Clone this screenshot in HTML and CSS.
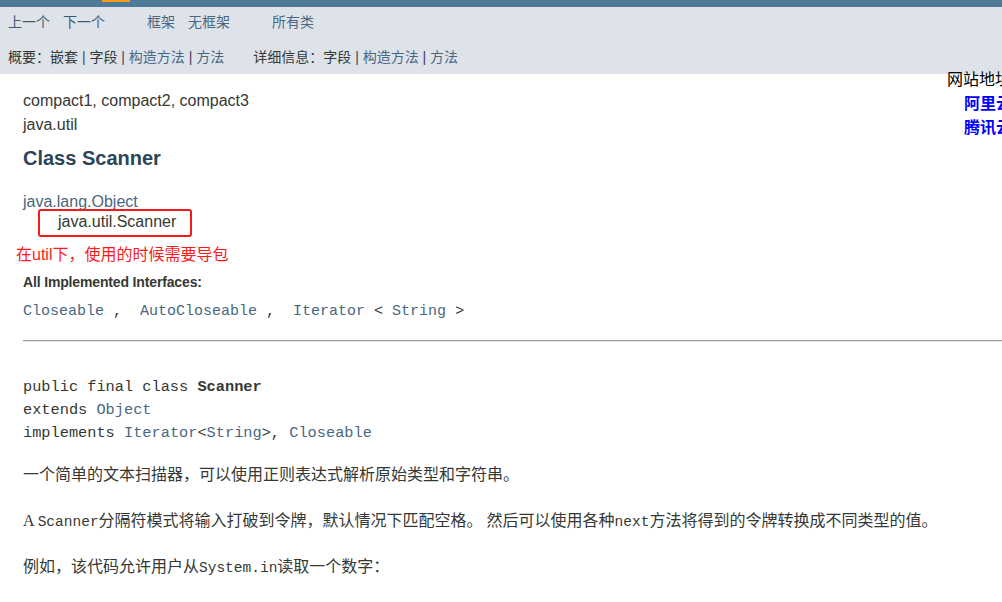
FILE: index.html
```html
<!DOCTYPE html>
<html lang="zh">

<head>
    <meta charset="utf-8">
    <meta name="viewport" content="width=device-width, initial-scale=1.0">

    <title>Scanner</title>

    <link rel="stylesheet" href="styles.css">

</head>

<body>
    <div class="top-nav">
        <div class="tab"></div>
    </div>

    <div class="sub-nav">
        <ul class="nav-row">
            <li class="group">
                <span class="dim">上一个</span>
                <span class="dim">下一个</span>
            </li>
            <li class="group">
                <a href="#">框架</a>
                <a href="#">无框架</a>
            </li>
            <li class="group">
                <a href="#">所有类</a>
            </li>
        </ul>
        <ul class="nav-row second">
            <li class="group">概要：嵌套<span class="sep"> | </span>字段<span class="sep"> | </span><a href="#">构造方法</a><span class="sep"> | </span><a href="#">方法</a></li>
            <li class="group">详细信息：字段<span class="sep"> | </span><a href="#">构造方法</a><span class="sep"> | </span><a href="#">方法</a></li>
        </ul>
    </div>

    <aside class="links">
        <p>网站地址：</p>
        <p class="site">阿里云服务器地址</p>
        <p class="site">腾讯云服务器地址</p>
    </aside>

    <main class="content">
        <div class="package">compact1, compact2, compact3</div>
        <div class="package">java.util</div>
        <h2 class="title">Class Scanner</h2>

        <div class="inherit">
            <a href="#">java.lang.Object</a>
            <div class="sub-class">java.util.Scanner</div>
        </div>

        <p class="note">在util下，使用的时候需要导包</p>

        <dl class="impl">
            <dt>All Implemented Interfaces:</dt>
            <dd><a href="#">Closeable</a> ,  <a href="#">AutoCloseable</a> ,  <a href="#">Iterator</a> &lt; <a href="#">String</a> &gt;</dd>
        </dl>

        <hr>

        <pre class="decl">public final class <b>Scanner</b>
extends <a href="#">Object</a>
implements <a href="#">Iterator</a>&lt;<a href="#">String</a>&gt;, <a href="#">Closeable</a></pre>

        <div class="block">
            <p>一个简单的文本扫描器，可以使用正则表达式解析原始类型和字符串。</p>
            <p>A <code>Scanner</code>分隔符模式将输入打破到令牌，默认情况下匹配空格。 然后可以使用各种<code>next</code>方法将得到的令牌转换成不同类型的值。</p>
            <p>例如，该代码允许用户从<code>System.in</code>读取一个数字：</p>
        </div>
    </main>

</body>

</html>
```

FILE: styles.css
```css
html,
body {
    margin: 0;
    overflow: hidden;
}

body {
    font-family: "Liberation Sans", "Noto Sans CJK SC", sans-serif;
    color: #353833;
    background: #fff;
    position: relative;
}

a {
    color: #4a6782;
    text-decoration: none;
}

.top-nav {
    height: 7px;
    background: #4d7a97;
}

.top-nav .tab {
    margin-left: 102px;
    width: 28px;
    height: 2px;
    background: #f8981d;
}

.sub-nav {
    height: 67px;
    background: #dee3e9;
    padding: 0 8px;
    font-size: 14px;
    box-sizing: border-box;
}

.nav-row {
    list-style: none;
    margin: 0;
    padding: 5px 0 0 0;
    display: flex;
    gap: 42px;
    line-height: 20px;
}

.nav-row .group {
    display: flex;
    gap: 13px;
}

.nav-row .dim {
    color: #3f5b74;
}

.nav-row.second {
    padding-top: 15px;
    gap: 29px;
}

.nav-row.second .group {
    display: block;
    white-space: pre;
}

.sep {
    color: #4b3a5a;
}

.links {
    position: absolute;
    top: 68px;
    left: 947px;
    white-space: nowrap;
    font-size: 16px;
    color: #000;
}

.links p {
    margin: 0;
    line-height: 24px;
}

.links .site {
    padding-left: 17px;
    font-weight: bold;
    color: #0000ff;
}

.content {
    padding: 15px 0 0 23px;
}

.package {
    font-size: 16px;
    line-height: 24px;
}

.title {
    margin: 8px 0 0 0;
    font-size: 20px;
    line-height: 26px;
    color: #2c4557;
}

.inherit {
    margin-top: 21px;
    font-size: 16px;
    line-height: 19px;
}

.inherit a {
    display: block;
    line-height: 19px;
}

.sub-class {
    display: inline-block;
    margin: -2px 0 0 15px;
    padding: 1px 14px 4px 18px;
    border: 2px solid #f21c1c;
    border-radius: 3px;
    color: #353833;
}

.note {
    margin: 8px 0 0 -7px;
    font-size: 16px;
    line-height: 20px;
    color: #ff1a1a;
}

.impl {
    margin: 9px 0 0 0;
}

.impl dt {
    font-size: 14px;
    font-weight: bold;
    line-height: 16px;
    letter-spacing: -0.15px;
}

.impl dd {
    margin: 12px 0 0 0;
    font-family: "Liberation Mono", monospace;
    font-size: 15px;
    line-height: 20px;
    white-space: pre;
}

hr {
    margin: 18px 0 0 0;
    border: 0;
    border-top: 1px solid #9a9a9a;
    border-bottom: 1px solid #e6e6e6;
}

.decl {
    margin: 34px 0 0 0;
    font-family: "Liberation Mono", monospace;
    font-size: 15.3px;
    line-height: 23px;
    color: #353833;
}

.decl b {
    font-weight: bold;
}

.block {
    margin-top: 18px;
    font-family: "Liberation Serif", "Noto Sans CJK SC", serif;
    font-size: 16px;
}

.block p {
    margin: 0 0 22px 0;
    line-height: 24px;
}

.block code {
    font-family: "Liberation Mono", monospace;
    font-size: 14.5px;
    line-height: 1;
    color: #353833;
}
```
